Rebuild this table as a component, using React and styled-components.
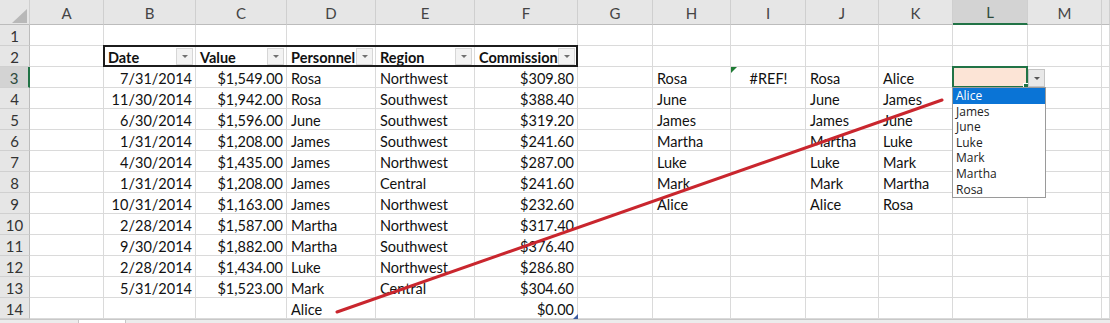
import React from 'react';
import styled, { createGlobalStyle, css } from 'styled-components';

const COLS = [30, 74, 92, 91, 89, 99, 103, 75, 78, 75, 73, 74, 75, 74, 8];
const TEMPLATE = COLS.map((c) => `${c}px`).join(' ');
const LETTERS = ['A', 'B', 'C', 'D', 'E', 'F', 'G', 'H', 'I', 'J', 'K', 'L', 'M', ''];
const ALIGN = ['left', 'right', 'right', 'left', 'left', 'right', 'left', 'left', 'center', 'left', 'left', 'left', 'left', 'left'];

const TABLE = [
  ['7/31/2014', '$1,549.00', 'Rosa', 'Northwest', '$309.80'],
  ['11/30/2014', '$1,942.00', 'Rosa', 'Southwest', '$388.40'],
  ['6/30/2014', '$1,596.00', 'June', 'Southwest', '$319.20'],
  ['1/31/2014', '$1,208.00', 'James', 'Southwest', '$241.60'],
  ['4/30/2014', '$1,435.00', 'James', 'Northwest', '$287.00'],
  ['1/31/2014', '$1,208.00', 'James', 'Central', '$241.60'],
  ['10/31/2014', '$1,163.00', 'James', 'Northwest', '$232.60'],
  ['2/28/2014', '$1,587.00', 'Martha', 'Northwest', '$317.40'],
  ['9/30/2014', '$1,882.00', 'Martha', 'Southwest', '$376.40'],
  ['2/28/2014', '$1,434.00', 'Luke', 'Northwest', '$286.80'],
  ['5/31/2014', '$1,523.00', 'Mark', 'Central', '$304.60'],
  ['', '', 'Alice', '', '$0.00'],
];
const H_LIST = ['Rosa', 'June', 'James', 'Martha', 'Luke', 'Mark', 'Alice'];
const K_LIST = ['Alice', 'James', 'June', 'Luke', 'Mark', 'Martha', 'Rosa'];
const HEADERS = ['Date', 'Value', 'Personnel', 'Region', 'Commission'];

const Global = createGlobalStyle`
  html, body { margin: 0; padding: 0; background: #fff; overflow: hidden; }
  body { font-family: Lato, "Liberation Sans", sans-serif; }
`;

const Sheet = styled.div`
  position: relative;
  width: 1110px;
  height: 323px;
  overflow: hidden;
  background: #fff;
  display: flex;
  flex-direction: column;
`;

const Row = styled.div`
  display: grid;
  grid-template-columns: ${TEMPLATE};
  height: ${(p) => p.$h}px;
  flex: none;
`;

const ColHead = styled.div`
  box-sizing: border-box;
  position: relative;
  background: ${(p) => (p.$sel ? '#d3d3d3' : '#e6e6e6')};
  border-right: 1px solid #cfcfcf;
  border-bottom: ${(p) => (p.$sel ? '2px solid #217346' : '1px solid #bcbcbc')};
  display: flex;
  align-items: center;
  justify-content: center;
  font-size: 15px;
  padding-top: 1px;
  color: ${(p) => (p.$sel ? '#2d4a3b' : '#444')};
`;

const Corner = styled.div`
  position: absolute;
  left: 12px;
  top: 9px;
  width: 15px;
  height: 14px;
  background: #b8b8b8;
  clip-path: polygon(100% 0, 100% 100%, 0 100%);
`;

const RowHead = styled.div`
  box-sizing: border-box;
  background: ${(p) => (p.$sel ? '#d3d3d3' : '#e6e6e6')};
  border-right: ${(p) => (p.$sel ? '2px solid #217346' : '1px solid #bcbcbc')};
  border-bottom: 1px solid #d0d0d0;
  display: flex;
  align-items: center;
  justify-content: center;
  font-size: 15px;
  padding-top: 2px;
  color: ${(p) => (p.$sel ? '#2d4a3b' : '#333')};
`;

const justify = { left: 'flex-start', right: 'flex-end', center: 'center' };

const Cell = styled.div`
  box-sizing: border-box;
  position: relative;
  border-right: 1px solid #dadada;
  border-bottom: 1px solid #dadada;
  padding: 3px 3px 0 4px;
  display: flex;
  align-items: center;
  justify-content: ${(p) => justify[p.$align || 'left']};
  font-size: 14.5px;
  color: #111;
  white-space: nowrap;
  background: ${(p) => p.$bg || 'transparent'};
  ${(p) =>
    p.$th &&
    css`
      font-weight: 700;
      justify-content: space-between;
      padding-right: 2px;
      padding-top: 1px;
      & > span:first-child {
        padding-top: 2px;
      }
      &::before {
        content: '';
        position: absolute;
        left: ${p.$first ? '-1px' : '0'};
        right: -1px;
        top: -1px;
        bottom: -1px;
        border-top: 2px solid #1c1c1c;
        border-bottom: 2px solid #1c1c1c;
        border-left: ${p.$first ? '2px solid #1c1c1c' : 'none'};
        border-right: ${p.$last ? '2px solid #1c1c1c' : 'none'};
        pointer-events: none;
      }
    `}
`;

const FilterBtn = styled.span`
  box-sizing: border-box;
  flex: none;
  width: 17px;
  height: 17px;
  background: #f3f3f3;
  border: 1px solid #d6d6d6;
  display: flex;
  align-items: center;
  justify-content: center;
  &::after {
    content: '';
    border-left: 3px solid transparent;
    border-right: 3px solid transparent;
    border-top: 3px solid #707070;
  }
`;

const ErrorMark = styled.span`
  position: absolute;
  left: 0;
  top: 0;
  width: 6px;
  height: 6px;
  background: #1e7b34;
  clip-path: polygon(0 0, 100% 0, 0 100%);
`;

const ResizeMark = styled.span`
  position: absolute;
  right: -1px;
  bottom: -1px;
  width: 5px;
  height: 5px;
  background: #3c5ca0;
  clip-path: polygon(100% 0, 100% 100%, 0 100%);
`;

const Selection = styled.span`
  position: absolute;
  left: -1px;
  top: -1px;
  right: -1px;
  bottom: -1px;
  border: 2px solid #217346;
  pointer-events: none;
  &::after {
    content: '';
    position: absolute;
    right: -4px;
    bottom: -4px;
    width: 5px;
    height: 5px;
    background: #217346;
    border: 1px solid #fff;
  }
`;

const DropBtn = styled.span`
  box-sizing: border-box;
  position: absolute;
  left: calc(100% + 1px);
  top: 2px;
  width: 17px;
  height: 18px;
  background: #e8e8e8;
  border: 1px solid #c4c4c4;
  display: flex;
  align-items: center;
  justify-content: center;
  z-index: 4;
  &::after {
    content: '';
    border-left: 3px solid transparent;
    border-right: 3px solid transparent;
    border-top: 3px solid #555;
  }
`;

const DropList = styled.ul`
  box-sizing: border-box;
  position: absolute;
  left: -1px;
  top: 100%;
  width: 94px;
  margin: 0;
  padding: 0;
  list-style: none;
  background: #fff;
  border: 1px solid #9a9a9a;
  z-index: 10;
  font-family: "Open Sans", "Noto Sans", sans-serif;
  font-size: 12px;
`;

const DropItem = styled.li`
  height: 15.6px;
  line-height: 15.6px;
  padding-left: 3px;
  color: ${(p) => (p.$active ? '#fff' : '#222')};
  background: ${(p) => (p.$active ? '#0a74d6' : 'transparent')};
`;

const Overlay = styled.svg`
  position: absolute;
  left: 0;
  top: 0;
  pointer-events: none;
  z-index: 5;
`;

const Footer = styled.div`
  flex: 1;
  display: flex;
  background: #ececec;
  border-top: 1px solid #c8c8c8;
`;

const SheetTab = styled.div`
  margin-left: 78px;
  width: 46px;
  background: #fff;
  border-left: 1px solid #c6c6c6;
  border-right: 1px solid #c6c6c6;
`;

function cellContent(r, c) {
  if (r === 2 && c >= 1 && c <= 5) return { th: true, v: HEADERS[c - 1] };
  if (r >= 3 && r <= 14 && c >= 1 && c <= 5) return { v: TABLE[r - 3][c - 1] };
  if (r >= 3 && r <= 9 && c === 7) return { v: H_LIST[r - 3] };
  if (r >= 3 && r <= 9 && c === 9) return { v: H_LIST[r - 3] };
  if (r >= 3 && r <= 9 && c === 10) return { v: K_LIST[r - 3] };
  if (r === 3 && c === 8) return { v: '#REF!' };
  return { v: '' };
}

export default function App() {
  const rows = Array.from({ length: 14 }, (_, i) => i + 1);
  return (
    <Sheet>
      <Global />
      <Row $h={25}>
        <ColHead>
          <Corner />
        </ColHead>
        {LETTERS.map((l, i) => (
          <ColHead key={i} $sel={l === 'L'}>
            {l}
          </ColHead>
        ))}
      </Row>
      {rows.map((r) => (
        <Row key={r} $h={21}>
          <RowHead $sel={r === 3}>{r}</RowHead>
          {LETTERS.map((_, c) => {
            const { th, v } = cellContent(r, c);
            if (th) {
              return (
                <Cell key={c} $th $first={c === 1} $last={c === 5}>
                  <span>{v}</span>
                  <FilterBtn />
                </Cell>
              );
            }
            if (r === 3 && c === 11) {
              return (
                <Cell key={c} $bg="#fce4d6">
                  <Selection />
                  <DropBtn />
                  <DropList>
                    {K_LIST.map((n, k) => (
                      <DropItem key={n} $active={k === 0}>
                        {n}
                      </DropItem>
                    ))}
                  </DropList>
                </Cell>
              );
            }
            return (
              <Cell key={c} $align={ALIGN[c]}>
                {r === 3 && c === 8 && <ErrorMark />}
                {r === 14 && c === 5 && <ResizeMark />}
                {v}
              </Cell>
            );
          })}
        </Row>
      ))}
      <Footer>
        <SheetTab />
      </Footer>
      <Overlay width="1110" height="323" viewBox="0 0 1110 323">
        <line x1="337" y1="312" x2="942" y2="100" stroke="#c9262e" strokeWidth="3" strokeLinecap="round" />
      </Overlay>
    </Sheet>
  );
}
